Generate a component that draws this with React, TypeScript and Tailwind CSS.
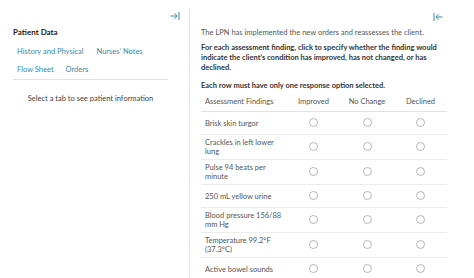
import { useState } from "react";

const findings = [
  "Brisk skin turgor",
  "Crackles in left lower lung",
  "Pulse 94 beats per minute",
  "250 mL yellow urine",
  "Blood pressure 156/88 mm Hg",
  "Temperature 99.2°F (37.3°C)",
  "Active bowel sounds",
];

const options = ["Improved", "No Change", "Declined"];

function CollapseRight() {
  return (
    <svg width="10" height="10" viewBox="0 0 10 10" fill="none" stroke="#3b8aa6" strokeWidth="1">
      <path d="M0.5 5h6.5M4.5 2.2L7.2 5 4.5 7.8M9 1v8" />
    </svg>
  );
}

function CollapseLeft() {
  return (
    <svg width="10" height="10" viewBox="0 0 10 10" fill="none" stroke="#3b8aa6" strokeWidth="1">
      <path d="M9.5 5H3M5.5 2.2L2.8 5 5.5 7.8M1 1v8" />
    </svg>
  );
}

export default function App() {
  const [answers, setAnswers] = useState<Record<number, number>>({});

  return (
    <div
      className="flex h-[278px] w-[474px] overflow-hidden bg-white text-[#555]"
      style={{ fontFamily: "Lato, 'Open Sans', sans-serif" }}
    >
      <aside className="flex w-[189px] shrink-0 flex-col pl-[13px] pr-[9px]">
        <div className="flex justify-end pt-[11px]">
          <CollapseRight />
        </div>
        <div className="mt-[5px] text-[8px] font-bold leading-[12px] text-[#222]">Patient Data</div>
        <div className="mr-[12px] border-b border-[#e3e3e3] pb-[3px] pl-[4px] text-[7.5px] leading-[12px] text-[#3b8aa6]">
          <div className="mt-[8px] flex gap-x-[13px]">
            <span>History and Physical</span>
            <span>Nurses’ Notes</span>
          </div>
          <div className="mt-[6px] flex gap-x-[12px]">
            <span>Flow Sheet</span>
            <span>Orders</span>
          </div>
        </div>
        <div className="mr-[12px] mt-[13px] text-center text-[7.5px] leading-[12px] text-[#444]">
          Select a tab to see patient information
        </div>
      </aside>

      <div className="mt-[8px] w-px shrink-0 bg-[#e3e3e3]" />

      <main className="flex flex-1 flex-col pl-[11px] pr-[22px]">
        <div className="flex justify-end pt-[12px] pr-[9px]">
          <CollapseLeft />
        </div>
        <p className="mt-[5px] text-[7.5px] leading-[11px]">
          The LPN has implemented the new orders and reassesses the client.
        </p>
        <p className="mt-[5px] text-[7.5px] font-bold leading-[10px] text-[#333]">
          For each assessment finding, click to specify whether the finding would indicate the
          client’s condition has improved, has not changed, or has declined.
        </p>
        <p className="mt-[7px] text-[7.5px] font-bold leading-[11px] text-[#333]">
          Each row must have only one response option selected.
        </p>
        <table className="mt-[6px] w-[246px] table-fixed border-collapse text-[7.5px] leading-[9px]">
          <colgroup>
            <col className="w-[86px]" />
            <col className="w-[53px]" />
            <col className="w-[54px]" />
            <col className="w-[53px]" />
          </colgroup>
          <thead>
            <tr className="border-b border-[#e3e3e3]">
              <th className="pb-[5px] pl-[4px] text-left font-normal">Assessment Findings</th>
              {options.map((o) => (
                <th key={o} className="pb-[5px] text-center font-normal">
                  {o}
                </th>
              ))}
            </tr>
          </thead>
          <tbody>
            {findings.map((f, i) => (
              <tr key={f} className="border-b border-[#ececec]">
                <td className="h-[23px] py-[3px] pl-[4px] pr-[4px] align-middle">{f}</td>
                {options.map((o, j) => (
                  <td key={o} className="text-center align-middle">
                    <button
                      onClick={() => setAnswers({ ...answers, [i]: j })}
                      className="mx-auto -mt-[2px] flex h-[9px] w-[9px] items-center justify-center rounded-full border border-[#b5b5b5]"
                    >
                      {answers[i] === j && <span className="h-[5px] w-[5px] rounded-full bg-[#3b8aa6]" />}
                    </button>
                  </td>
                ))}
              </tr>
            ))}
          </tbody>
        </table>
      </main>
    </div>
  );
}
